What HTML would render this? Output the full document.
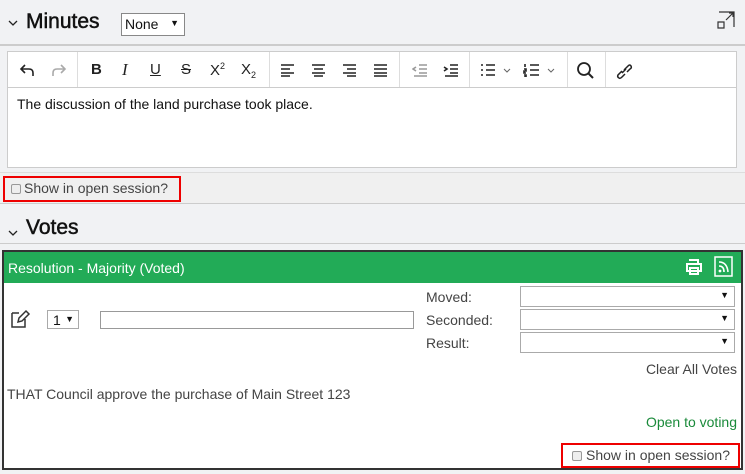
<!DOCTYPE html>
<html><head><style>
*{box-sizing:border-box;margin:0;padding:0}
body{width:745px;height:474px;background:#f1f2f4;font-family:"Liberation Sans",sans-serif;position:relative;overflow:hidden;color:#333}
.abs{position:absolute}
.h{font-size:21px;color:#111;-webkit-text-stroke:0.5px #111}
.sel{border:1px solid #888;background:#fff;font-size:14px;color:#111}
.tb{position:absolute;top:51px;left:7px;width:730px;height:117px;border:1px solid #ccc;background:#fff}
.tool{position:absolute;top:0;height:36px;border-bottom:1px solid #ccc;width:100%}
.sep{position:absolute;top:0;width:1px;height:35px;background:#ddd}
.ic{position:absolute;top:9px;font-size:15px;color:#222}
svg{position:absolute}
.lbl{font-size:14px;color:#444}
.dd{position:absolute;left:520px;width:215px;height:21px;border:1px solid #aaa;background:#fff}
.dd:after{content:"▼";position:absolute;right:5px;top:3px;font-size:9px;color:#111}
</style></head><body>
<div class="abs" style="left:0;top:44px;width:745px;height:2px;background:#ccc"></div>
<svg style="left:8px;top:19px" width="10" height="8"><path d="M1 2L5 6L9 2" fill="none" stroke="#222" stroke-width="1.3"/></svg>
<div class="abs h" style="left:26px;top:10px">Minutes</div>
<div class="abs sel" style="left:121px;top:13px;width:64px;height:23px;padding:2px 0 0 3px">None<span style="position:absolute;right:5px;top:4px;font-size:9px">▼</span></div>
<svg style="left:716px;top:11px" width="20" height="20"><path d="M3 1H18V16M10 9L17 2M13 2H17V6M2 11H8V17H2Z" fill="none" stroke="#333" stroke-width="1.2"/></svg>

<div class="tb">
 <div class="tool">
  <svg style="left:10px;top:10px" width="18" height="16"><path d="M7 3L3 7L7 11M3 7H11Q15 7 15 11V14" fill="none" stroke="#222" stroke-width="1.6"/></svg>
  <svg style="left:42px;top:10px" width="18" height="16"><path d="M11 3L15 7L11 11M15 7H7Q3 7 3 11V14" fill="none" stroke="#aaa" stroke-width="1.6"/></svg>
  <div class="sep" style="left:69px"></div>
  <div class="ic" style="left:83px;font-weight:bold">B</div>
  <div class="ic" style="left:114px;font-style:italic;font-family:'Liberation Serif',serif;font-size:17px;top:8px">I</div>
  <div class="ic" style="left:142px;text-decoration:underline">U</div>
  <div class="ic" style="left:173px;text-decoration:line-through">S</div>
  <div class="ic" style="left:202px">X<sup style="font-size:9px">2</sup></div>
  <div class="ic" style="left:233px">X<sub style="font-size:9px">2</sub></div>
  <div class="sep" style="left:261px"></div>
  <svg style="left:272px;top:11px" width="120" height="14" stroke="#222" stroke-width="1.6"><path d="M1 2H14M1 6H10M1 10H14M1 13H10"/><path d="M32 2H45M34 6H43M32 10H45M34 13H43"/><path d="M63 2H76M67 6H76M63 10H76M67 13H76"/><path d="M94 2H107M94 6H107M94 10H107M94 13H107"/></svg>
  <div class="sep" style="left:391px"></div>
  <svg style="left:404px;top:11px" width="60" height="14" stroke-width="1.6"><path d="M7 2H15M7 6H15M7 10H15M2 13H15M4 4L1 6L4 8M1 2" stroke="#999" fill="none"/><path d="M38 2H46M38 6H46M38 10H46M33 13H46M32 4L35 6L32 8" stroke="#222" fill="none"/></svg>
  <div class="sep" style="left:461px"></div>
  <svg style="left:472px;top:11px" width="90" height="14" stroke="#222" stroke-width="1.6" fill="none"><path d="M1 2H3M1 7H3M1 12H3M6 2H15M6 7H15M6 12H15"/><path d="M24 6L27 9L30 6" stroke="#666" stroke-width="1"/><path d="M45 1V4M44 6H46V8H44V10H46M44 12H46V14H44M50 2H59M50 7H59M50 12H59"/><path d="M68 6L71 9L74 6" stroke="#666" stroke-width="1"/></svg>
  <div class="sep" style="left:559px"></div>
  <svg style="left:568px;top:9px" width="20" height="20"><circle cx="8" cy="8" r="6" fill="none" stroke="#222" stroke-width="1.8"/><path d="M12 12L17 17" stroke="#222" stroke-width="2"/></svg>
  <div class="sep" style="left:597px"></div>
  <svg style="left:606px;top:10px" width="20" height="18"><path d="M8 9L4 13Q3 15 5 16Q6 17 8 15L11 12M10 8L14 4Q16 2 17 4Q18 6 16 7L13 10M8 11L12 7" fill="none" stroke="#222" stroke-width="1.5"/></svg>
 </div>
 <div class="abs" style="left:9px;top:44px;font-size:14px;color:#111">The discussion of the land purchase took place.</div>
</div>

<div class="abs" style="left:0;top:172px;width:745px;height:32px;background:#f0f0f0;border-top:1px solid #ddd;border-bottom:1px solid #ccc"></div>
<div class="abs" style="left:3px;top:176px;width:178px;height:26px;border:2px solid #e00;background:#f0f0f0"></div>
<div class="abs" style="left:11px;top:184px;width:10px;height:10px;border:1px solid #999;background:#eee;border-radius:2px"></div>
<div class="abs" style="left:24px;top:180px;font-size:14px;color:#444">Show in open session?</div>

<svg style="left:8px;top:229px" width="10" height="8"><path d="M1 2L5 6L9 2" fill="none" stroke="#222" stroke-width="1.3"/></svg>
<div class="abs h" style="left:26px;top:216px">Votes</div>
<div class="abs" style="left:0;top:243px;width:745px;height:1px;background:#ccc"></div>

<div class="abs" style="left:2px;top:250px;width:741px;height:220px;border:2px solid #333;background:#fff"></div>
<div class="abs" style="left:4px;top:252px;width:737px;height:31px;background:#22ab57"></div>
<div class="abs" style="left:8px;top:260px;font-size:14px;color:#fff">Resolution - Majority (Voted)</div>
<svg style="left:684px;top:257px" width="20" height="20"><path d="M5 3H14V7M3 7H17V14H3ZM6 11H14V17H6Z" fill="none" stroke="#fff" stroke-width="2"/></svg>
<svg style="left:714px;top:256px" width="20" height="21"><rect x="1" y="1" width="17" height="19" fill="none" stroke="#fff" stroke-width="1.5"/><path d="M5 6Q13 6 14 16M5 10Q10 10 10 16" fill="none" stroke="#fff" stroke-width="1.6"/><circle cx="6" cy="15" r="1.4" fill="#fff"/></svg>

<svg style="left:10px;top:309px" width="22" height="20"><path d="M2 4H9M2 4V18H15V10M8 13L9 9L16 2L19 5L12 12Z" fill="none" stroke="#333" stroke-width="1.5"/></svg>
<div class="abs sel" style="left:47px;top:310px;width:32px;height:19px;padding:1px 0 0 5px;border-color:#aaa">1<span style="position:absolute;right:4px;top:3px;font-size:9px">▼</span></div>
<div class="abs" style="left:100px;top:311px;width:314px;height:18px;border:1px solid #999"></div>
<div class="abs lbl" style="left:426px;top:289px">Moved:</div>
<div class="abs lbl" style="left:426px;top:312px">Seconded:</div>
<div class="abs lbl" style="left:426px;top:335px">Result:</div>
<div class="dd" style="top:286px"></div>
<div class="dd" style="top:309px"></div>
<div class="dd" style="top:332px"></div>
<div class="abs lbl" style="right:8px;top:361px">Clear All Votes</div>
<div class="abs lbl" style="left:7px;top:386px">THAT Council approve the purchase of Main Street 123</div>
<div class="abs lbl" style="right:8px;top:414px;color:#1a8a3a">Open to voting</div>
<div class="abs" style="left:561px;top:443px;width:179px;height:25px;border:2px solid #e00;background:#fff"></div>
<div class="abs" style="left:572px;top:451px;width:10px;height:10px;border:1px solid #999;background:#eee;border-radius:2px"></div>
<div class="abs lbl" style="left:586px;top:447px">Show in open session?</div>
</body></html>
